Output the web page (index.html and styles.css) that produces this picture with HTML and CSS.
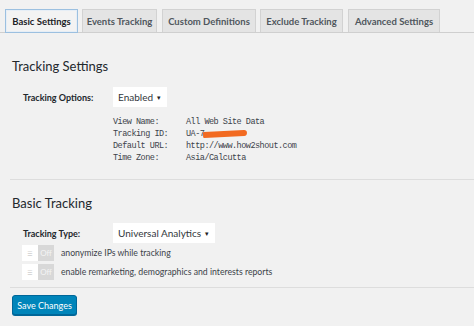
FILE: index.html
```html
<!DOCTYPE html>
<html>
<head>
<meta charset="utf-8">
<link rel="stylesheet" href="styles.css">
</head>
<body>
<div class="page">
  <nav class="tabs">
    <span class="tab active t1">Basic Settings</span>
    <span class="tab t2">Events Tracking</span>
    <span class="tab t3">Custom Definitions</span>
    <span class="tab t4">Exclude Tracking</span>
    <span class="tab t5">Advanced Settings</span>
  </nav>

  <section class="section first">
    <h2 class="heading">Tracking Settings</h2>
    <div class="row">
      <span class="label">Tracking Options:</span>
      <span class="select">Enabled <span class="caret">&#9662;</span></span>
    </div>
    <div class="info">
      <span>View Name:</span><span>All Web Site Data</span>
      <span>Tracking ID:</span><span class="redact">UA-7<span class="scribble"></span></span>
      <span>Default URL:</span><span>http://www.how2shout.com</span>
      <span>Time Zone:</span><span>Asia/Calcutta</span>
    </div>
  </section>

  <section class="section second">
    <h2 class="heading">Basic Tracking</h2>
    <div class="row">
      <span class="label">Tracking Type:</span>
      <span class="select">Universal Analytics <span class="caret">&#9662;</span></span>
    </div>
    <div class="toggles">
      <div class="toggle-row"><span class="toggle"><span class="knob">&#8801;</span><span class="off">Off</span></span>anonymize IPs while tracking</div>
      <div class="toggle-row"><span class="toggle"><span class="knob">&#8801;</span><span class="off">Off</span></span>enable remarketing, demographics and interests reports</div>
    </div>
  </section>

  <div class="actions">
    <span class="button">Save Changes</span>
  </div>
</div>
</body>
</html>
```

FILE: styles.css
```css
html, body {
  margin: 0;
  padding: 0;
  background: #f1f1f1;
}
body {
  font-family: "Lato", "Open Sans", sans-serif;
  font-size: 9px;
  color: #23282d;
  width: 474px;
  height: 326px;
  overflow: hidden;
}
.page {
  padding: 9px 0 0 0;
}
.tabs {
  display: flex;
  padding-left: 5px;
  border-bottom: 1px solid #cfcfcf;
  height: 23px;
}
.tab {
  display: flex;
  align-items: center;
  justify-content: center;
  white-space: nowrap;
  box-sizing: border-box;
  height: 23px;
  background: #e4e4e4;
  border: 1px solid #d2d2d2;
  border-bottom: none;
  color: #50575e;
  font-size: 9.5px;
  font-weight: 700;
}
.t1 { width: 73px; margin-right: 4px; }
.t2 { width: 75px; margin-right: 5px; }
.t3 { width: 94px; margin-right: 4px; }
.t4 { width: 83px; margin-right: 5px; }
.t5 { width: 92px; }
.tab.active {
  background: #f3f3f3;
  color: #1d2327;
  border: 1px solid #9cc0e0;
  height: 24px;
  margin-bottom: -1px;
  box-shadow: inset 0 0 0 1px #e6eef6;
}
.section {
  margin-left: 10px;
  border-bottom: 1px solid #dddddd;
}
.section.first {
  padding: 24px 0 15px 0;
}
.section.second {
  padding: 14px 0 6px 0;
}
.heading {
  margin: 0 0 0 2px;
  font-size: 13px;
  font-weight: 400;
  color: #23282d;
  line-height: 18px;
}
.row {
  display: grid;
  grid-template-columns: 90px auto;
  align-items: center;
  margin-top: 12px;
  padding-left: 13px;
}
.second .row {
  margin-top: 11px;
}
.label {
  font-weight: 700;
  font-size: 9px;
  color: #23282d;
}
.select {
  justify-self: start;
  background: #fff;
  height: 20px;
  display: flex;
  align-items: center;
  padding: 0 6px 0 5px;
  font-size: 10px;
  color: #32373c;
  gap: 4px;
}
.caret {
  font-size: 7px;
  color: #222;
}
.info {
  display: grid;
  grid-template-columns: 73px auto;
  margin: 9px 0 0 103px;
  font-family: "Liberation Mono", "DejaVu Sans Mono", monospace;
  font-size: 8.5px;
  letter-spacing: -0.5px;
  line-height: 12px;
  color: #3c434a;
}
.redact {
  position: relative;
}
.scribble {
  position: absolute;
  left: 17px;
  top: 3px;
  width: 44px;
  height: 6px;
  background: #f26a21;
  border-radius: 2px 5px 5px 2px;
  transform: rotate(-3deg);
}
.toggles {
  margin-top: 0;
  padding-left: 12px;
}
.toggle-row {
  display: flex;
  align-items: center;
  height: 19px;
  font-size: 8.7px;
  color: #3c434a;
}
.toggle {
  display: flex;
  width: 32px;
  height: 16px;
  margin-right: 7px;
}
.knob {
  width: 16px;
  background: #fff;
  color: #d0d0d0;
  font-size: 10px;
  display: flex;
  align-items: center;
  justify-content: center;
}
.off {
  width: 16px;
  background: #d8d8d8;
  color: #f4f4f4;
  font-size: 8px;
  display: flex;
  align-items: center;
  justify-content: center;
}
.actions {
  padding: 7px 0 0 12px;
}
.button {
  display: inline-flex;
  align-items: center;
  justify-content: center;
  width: 65px;
  height: 20px;
  background: #0085ba;
  border: 1px solid #006799;
  box-sizing: border-box;
  border-radius: 3px;
  color: #fff;
  font-size: 9px;
  box-shadow: 0 1px 0 #006799;
}
```
